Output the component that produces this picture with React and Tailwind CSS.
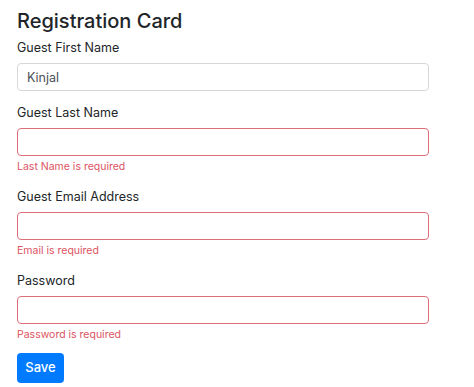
import { useState } from "react"

const FONT = { fontFamily: 'Inter, "Liberation Sans", Arial, sans-serif' }

function Field({ label, value, error, type = "text", className = "" }) {
  return (
    <div className={className}>
      <label className="block text-[12.5px] leading-[18px] text-[#212529]">{label}</label>
      <input
        type={type}
        defaultValue={value}
        className={
          "mt-[6px] block w-[412px] h-[28px] rounded-[4px] border bg-white px-[9px] text-[12.5px] text-[#495057] outline-none " +
          (error ? "border-[#df6d78]" : "border-[#d6d9dc]")
        }
      />
      {error && (
        <div className="mt-[4px] text-[10.5px] leading-[14px] text-[#dc5362]">{error}</div>
      )}
    </div>
  )
}

export default function App() {
  const [saved, setSaved] = useState(false)

  return (
    <div className="bg-white w-[474px] h-[387px] pl-[17px] pt-[8px]" style={FONT}>
      <h1 className="text-[20px] leading-[26px] font-medium text-[#212529]">Registration Card</h1>
      <Field className="mt-[5px]" label="Guest First Name" value="Kinjal" />
      <Field className="mt-[13px]" label="Guest Last Name" error="Last Name is required" />
      <Field className="mt-[14px]" label="Guest Email Address" error="Email is required" />
      <Field className="mt-[14px]" label="Password" type="password" error="Password is required" />
      <button
        onClick={() => setSaved(true)}
        className="mt-[11px] h-[30px] w-[47px] rounded-[4px] bg-[#007bff] text-[13px] font-medium text-white"
      >
        Save
      </button>
    </div>
  )
}
